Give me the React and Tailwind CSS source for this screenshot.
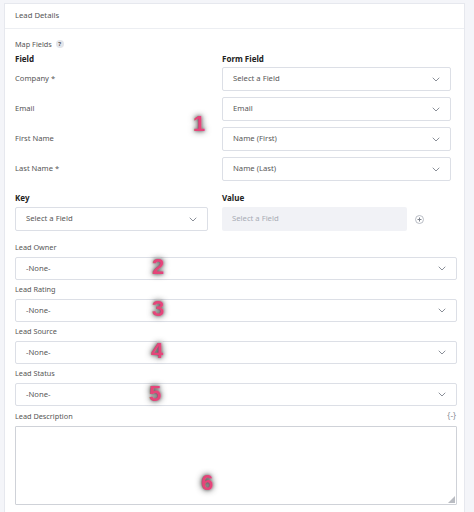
import React from "react";

const font = { fontFamily: '"Noto Sans", "Open Sans", Arial, sans-serif' };

function Chevron() {
  return (
    <svg width="8" height="5" viewBox="0 0 8 5" className="shrink-0">
      <path d="M1 1l3 3 3-3" fill="none" stroke="#8a8f98" strokeWidth="1" strokeLinecap="round" strokeLinejoin="round" />
    </svg>
  );
}

function Select({ text, className = "", h = "h-[24px]" }) {
  return (
    <div className={`flex items-center justify-between border border-[#dcdfe6] bg-white rounded-[2px] pl-[10px] pr-[10px] ${h} ${className}`}>
      <span className="text-[7.7px] text-[#585858]">{text}</span>
      <Chevron />
    </div>
  );
}

function Num({ n, cx, cy }) {
  return (
    <span
      className="absolute text-[22px] font-bold leading-none text-[#e5457a]"
      style={{
        left: cx - 6,
        top: cy - 12,
        fontFamily: '"Liberation Sans", Arial, sans-serif',
        WebkitTextStroke: "3px white",
        paintOrder: "stroke fill",
        textShadow: "0 0 6px rgba(0,0,0,0.8), 0 0 3px rgba(0,0,0,0.4)",
      }}
    >
      {n}
    </span>
  );
}

function FullRow({ label, text }) {
  return (
    <div className="flex flex-col">
      <div className="h-[14px] flex items-center text-[7.3px] text-[#555555]">{label}</div>
      <Select text={text} className="mt-[3px] w-[442px]" h="h-[23px]" />
    </div>
  );
}

export default function App() {
  const mapRows = [
    ["Company *", "Select a Field"],
    ["Email", "Email"],
    ["First Name", "Name (First)"],
    ["Last Name *", "Name (Last)"],
  ];
  return (
    <div className="relative w-[474px] h-[512px] bg-[#f4f5f9] overflow-hidden" style={font}>
      <div className="ml-[4px] mt-[3px] w-[461px] h-[520px] bg-white border border-[#e6e8ee]">
        <div className="h-[25px] flex items-center px-[10px] border-b border-[#eceef2] text-[7.7px] text-[#555555]">
          Lead Details
        </div>
        <div className="px-[10px] pt-[8px]">
          <div className="h-[14px] flex items-center gap-[4px] text-[7.3px] text-[#555555]">
            Map Fields
            <span className="w-[8px] h-[8px] rounded-full bg-[#e3e5ea] text-[6px] font-bold text-[#555] flex items-center justify-center leading-none">?</span>
          </div>
          <div className="flex h-[14px] items-center text-[8px] font-bold text-[#222222] mt-[1px]">
            <div className="w-[207px]">Field</div>
            <div>Form Field</div>
          </div>
          <div className="flex flex-col gap-[6px] mt-[1px]">
            {mapRows.map(([l, v]) => (
              <div key={l} className="flex items-center">
                <div className="w-[207px] text-[7.6px] text-[#555555]">{l}</div>
                <Select text={v} className="w-[229px]" />
              </div>
            ))}
          </div>
          <div className="flex h-[14px] items-center text-[8px] font-bold text-[#222222] mt-[10px]">
            <div className="w-[207px]">Key</div>
            <div>Value</div>
          </div>
          <div className="flex items-center mt-[2px]">
            <Select text="Select a Field" className="w-[193px]" h="h-[24px]" />
            <div className="ml-[14px] w-[185px] h-[24px] bg-[#f1f2f6] rounded-[2px] flex items-center pl-[10px] text-[7.7px] text-[#a8acb5]">
              Select a Field
            </div>
            <div className="ml-[8px] w-[9px] h-[9px] rounded-full border border-[#b9bdc5] flex items-center justify-center">
              <svg width="5" height="5" viewBox="0 0 5 5">
                <path d="M2.5 0.5v4M0.5 2.5h4" stroke="#7d828c" strokeWidth="1" />
              </svg>
            </div>
          </div>
          <div className="flex flex-col gap-[2px] mt-[9px]">
            <FullRow label="Lead Owner" text="-None-" />
            <FullRow label="Lead Rating" text="-None-" />
            <FullRow label="Lead Source" text="-None-" />
            <FullRow label="Lead Status" text="-None-" />
          </div>
          <div className="flex h-[14px] items-center justify-between w-[442px] mt-[3px] text-[7.3px] text-[#555555]">
            <span>Lead Description</span>
            <span className="text-[#8a8f98] text-[8px] pr-[1px]">{"{-}"}</span>
          </div>
          <div className="relative mt-[3px] w-[442px] h-[79px] border border-[#cfd2d8] bg-white rounded-[1px]">
            <svg className="absolute right-[1px] bottom-[1px]" width="7" height="7" viewBox="0 0 7 7">
              <path d="M7 0L0 7h7z" fill="#b9bcc2" />
            </svg>
          </div>
        </div>
      </div>
      <Num n="1" cx={199} cy={125} />
      <Num n="2" cx={158} cy={268} />
      <Num n="3" cx={158} cy={310} />
      <Num n="4" cx={157} cy={352} />
      <Num n="5" cx={155} cy={395} />
      <Num n="6" cx={207} cy={484} />
    </div>
  );
}
